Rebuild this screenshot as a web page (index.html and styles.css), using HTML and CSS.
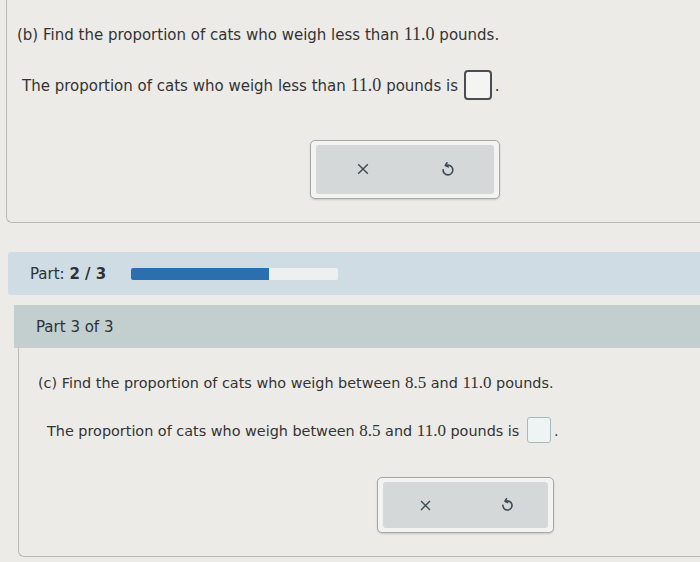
FILE: index.html
```html
<!DOCTYPE html>
<html>
<head>
<meta charset="utf-8">
<link rel="stylesheet" href="styles.css">
</head>
<body>
<div class="card card-b">
  <p class="q q-b">(b) Find the proportion of cats who weigh less than <span class="num">11.0</span> pounds.</p>
  <p class="a a-b">The proportion of cats who weigh less than <span class="num">11.0</span> pounds is <span class="box"></span><span class="dot">.</span></p>
  <div class="btns btns-b">
    <div class="btns-in">
      <svg class="ico" width="14" height="14" viewBox="0 0 16 16"><path d="M2.5 2.5 L13.5 13.5 M13.5 2.5 L2.5 13.5" stroke="#3d4a52" stroke-width="1.6" fill="none"/></svg>
      <svg class="ico" width="15" height="17" viewBox="0 0 16 18"><path d="M6 5 A5.2 5.2 0 1 1 3.4 8.6" stroke="#3d4a52" stroke-width="1.7" fill="none"/><path d="M7.4 1.8 L5.6 4.8 L8.8 6.2" stroke="#3d4a52" stroke-width="1.7" fill="none" stroke-linejoin="round" stroke-linecap="round"/></svg>
    </div>
  </div>
</div>

<div class="part-bar">
  <span class="part-label">Part: <b>2 / 3</b></span>
  <div class="progress"><div class="fill" style="width:66.6%"></div></div>
</div>

<div class="part-head">Part 3 of 3</div>

<div class="card card-c">
  <p class="q q-c">(c) Find the proportion of cats who weigh between <span class="num">8.5</span> and <span class="num">11.0</span> pounds.</p>
  <p class="a a-c">The proportion of cats who weigh between <span class="num">8.5</span> and <span class="num">11.0</span> pounds is <span class="box box-c"></span><span class="dot">.</span></p>
  <div class="btns btns-c">
    <div class="btns-in">
      <svg class="ico" width="13" height="13" viewBox="0 0 16 16"><path d="M2.5 2.5 L13.5 13.5 M13.5 2.5 L2.5 13.5" stroke="#3d4a52" stroke-width="1.7" fill="none"/></svg>
      <svg class="ico" width="14" height="16" viewBox="0 0 16 18"><path d="M6 5 A5.2 5.2 0 1 1 3.4 8.6" stroke="#3d4a52" stroke-width="1.8" fill="none"/><path d="M7.4 1.8 L5.6 4.8 L8.8 6.2" stroke="#3d4a52" stroke-width="1.8" fill="none" stroke-linejoin="round" stroke-linecap="round"/></svg>
    </div>
  </div>
</div>
</body>
</html>
```

FILE: styles.css
```css
html, body {
  margin: 0;
  padding: 0;
}
body {
  width: 700px;
  height: 562px;
  overflow: hidden;
  background: #ecebe8;
  font-family: "DejaVu Sans", Verdana, sans-serif;
  font-size: 15px;
  color: #333;
}
p { margin: 0; }
.num {
  font-family: "Liberation Serif", "Times New Roman", serif;
  font-size: 18px;
}
.card {
  border-left: 1px solid #b9b9b7;
  border-bottom: 1px solid #b9b9b7;
  border-bottom-left-radius: 6px;
  display: flex;
  flex-direction: column;
}
.card-b {
  margin-left: 6px;
  height: 222px;
}
.q-b {
  margin-top: 23px;
  margin-left: 10px;
  line-height: 22px;
}
.a-b {
  margin-top: 24px;
  margin-left: 15px;
  line-height: 30px;
}
.box {
  display: inline-block;
  vertical-align: middle;
  width: 24px;
  height: 26px;
  border: 2px solid #4a4e52;
  border-radius: 4px;
  margin-left: 1px;
  background: #f4f4f2;
  position: relative;
  top: -2px;
}
.dot { margin-left: 3px; }
.btns {
  align-self: flex-start;
  border: 1.5px solid #a6a8a8;
  border-radius: 5px;
  background: #f3f3f1;
  padding: 4px 5px;
  box-shadow: 0 1px 2px rgba(0,0,0,0.15);
}
.btns-in {
  background: #d5d8d8;
  border-radius: 3px;
  display: flex;
  align-items: center;
  justify-content: space-between;
}
.btns-b {
  margin-top: 38px;
  margin-left: 303px;
  width: 178px;
}
.btns-b .btns-in { height: 49px; padding: 0 39px 0 40px; }
.part-bar {
  margin-top: 29px;
  margin-left: 8px;
  height: 43px;
  background: #cfdce4;
  border-top-left-radius: 3px;
  border-bottom-left-radius: 3px;
  display: flex;
  align-items: center;
}
.part-label {
  margin-left: 22px;
  color: #2e3236;
}
.part-label b { font-weight: bold; }
.progress {
  margin-left: 25px;
  width: 207px;
  height: 12px;
  background: #eef0f0;
  border-radius: 2px;
  overflow: hidden;
}
.fill {
  height: 100%;
  background: #2b6fae;
}
.part-head {
  margin-top: 10px;
  margin-left: 14px;
  height: 43px;
  background: #c3cfce;
  display: flex;
  align-items: center;
  padding-left: 22px;
  color: #2e3236;
}
.card-c {
  margin-left: 18px;
  height: 208px;
  font-size: 14.4px;
}
.card-c .num { font-size: 17px; }
.q-c {
  margin-top: 24px;
  margin-left: 19px;
  line-height: 22px;
}
.a-c {
  margin-top: 22px;
  margin-left: 28px;
  line-height: 30px;
}
.box-c {
  width: 22px;
  height: 24px;
  border: 1.5px solid #a9b9bb;
  border-radius: 3px;
  background: #eef3f3;
  margin-left: 3px;
}
.btns-c {
  margin-top: 31px;
  margin-left: 358px;
  width: 165px;
}
.btns-c .btns-in { height: 46px; padding: 0 34px 0 36px; }
```
